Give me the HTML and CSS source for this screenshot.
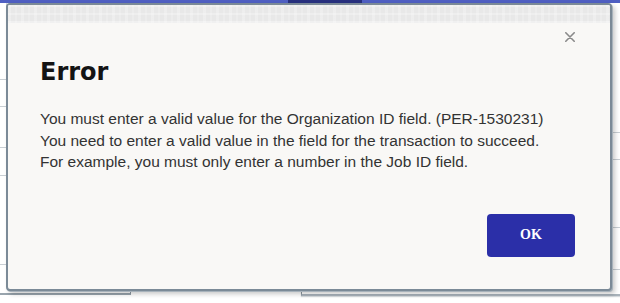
FILE: index.html
```html
<!DOCTYPE html>
<html>
<head>
<meta charset="utf-8">
<link rel="stylesheet" href="styles.css">
</head>
<body>
<div class="page">
  <div class="topbar"><span class="toptitle"></span></div>
  <div class="middle">
    <div class="strip strip-left">
      <div class="cell h77"></div>
      <div class="cell h26"></div>
      <div class="cell h40"></div>
      <div class="cell h27"></div>
      <div class="cell h88"></div>
    </div>
    <div class="strip strip-right">
      <div class="cell h130"></div>
      <div class="cell h26"></div>
      <div class="cell h67"></div>
      <div class="cell h41"></div>
    </div>
  </div>
  <div class="bottom">
    <div class="box box-left"></div>
    <div class="box box-right"></div>
  </div>
</div>

<div class="dialog" role="dialog" aria-labelledby="dlg-title">
  <div class="band"></div>
  <div class="content">
    <div class="header">
      <button class="close" aria-label="Close">
        <svg width="10" height="10" viewBox="0 0 10 10"><path d="M0.8 0.8 L9.2 9.2 M9.2 0.8 L0.8 9.2" stroke="#8a8a8a" stroke-width="1.6" stroke-linecap="round" fill="none"/></svg>
      </button>
    </div>
    <h1 class="title" id="dlg-title">Error</h1>
    <p class="message">You must enter a valid value for the Organization ID field. (PER-1530231)<br>You need to enter a valid value in the field for the transaction to succeed.<br>For example, you must only enter a number in the Job ID field.</p>
    <div class="actions">
      <button class="ok">OK</button>
    </div>
  </div>
</div>
</body>
</html>
```

FILE: styles.css
```css
html, body {
  margin: 0;
  padding: 0;
  background: #ffffff;
  font-family: "Liberation Sans", Arial, sans-serif;
}

.page {
  width: 620px;
  height: 303px;
  display: flex;
  flex-direction: column;
  overflow: hidden;
}

.topbar {
  height: 3px;
  background: #4f5fc2;
  display: flex;
  justify-content: center;
}

.toptitle {
  width: 74px;
  height: 3px;
  background: #27307e;
  margin-left: 30px;
}

.middle {
  height: 279px;
  display: flex;
  justify-content: space-between;
}

.strip {
  display: flex;
  flex-direction: column;
}

.strip-left { width: 7px; }
.strip-right { width: 8px; }

.cell {
  border-bottom: 1px solid #c9cfd4;
  flex: none;
}

.strip-left .cell { border-right: 1px solid #d4d8dc; }

.h77 { height: 76px; }
.h26 { height: 26px; }
.h40 { height: 40px; }
.h27 { height: 27px; }
.h88 { height: 88px; }
.h130 { height: 129px; }
.h67 { height: 67px; }
.h41 { height: 41px; }

.bottom {
  height: 14px;
  display: flex;
  justify-content: space-between;
  align-items: flex-start;
}

.box-left {
  width: 130px;
  height: 11px;
  border-right: 1px solid #8c98a2;
  border-bottom: 2px solid #98a4ad;
}

.box-right {
  width: 318px;
  height: 12px;
  border-left: 1px solid #8c98a2;
  border-bottom: 2px solid #a9b3bb;
  box-shadow: 0 1px 1px #d6dadd;
}

.dialog {
  position: absolute;
  left: 6px;
  top: 3px;
  width: 606px;
  height: 288px;
  box-sizing: border-box;
  border: 2px solid #7b8a97;
  border-radius: 4px;
  background: #f9f8f6;
  box-shadow: 1px 1px 0 #a7b2bb, 3px 3px 5px rgba(0, 0, 0, 0.22);
  overflow: hidden;
}

.band {
  height: 18px;
  background-color: #ebebeb;
  background-image:
    repeating-linear-gradient(90deg, rgba(255,255,255,0.25) 0 3px, rgba(255,255,255,0) 3px 7px, rgba(255,255,255,0.18) 7px 9px, rgba(255,255,255,0) 9px 13px),
    linear-gradient(180deg, #efefef 0 2px, #e8e8e8 2px 8px, #eeeeee 8px 10px, #e8e8e8 10px 16px, #f0f0f0 16px 18px);
}

.content {
  padding: 0 35px 0 32px;
}

.header {
  height: 35px;
  display: flex;
  justify-content: flex-end;
  align-items: flex-start;
}

.close {
  margin-top: 9px;
  padding: 0;
  border: 0;
  background: transparent;
  width: 10px;
  height: 10px;
  display: flex;
}

.title {
  margin: 0;
  font-family: "DejaVu Sans", Verdana, sans-serif;
  font-size: 24px;
  line-height: 28px;
  font-weight: bold;
  color: #141414;
}

.message {
  margin: 22px 0 0 0;
  font-size: 15.5px;
  line-height: 21.6px;
  color: #333333;
}

.actions {
  margin-top: 41px;
  display: flex;
  justify-content: flex-end;
}

.ok {
  width: 88px;
  height: 43px;
  border: 0;
  border-radius: 4px;
  background: #2b2fa8;
  color: #ffffff;
  font-family: "Liberation Serif", "Times New Roman", serif;
  font-weight: bold;
  font-size: 14px;
  padding: 0;
}
```
